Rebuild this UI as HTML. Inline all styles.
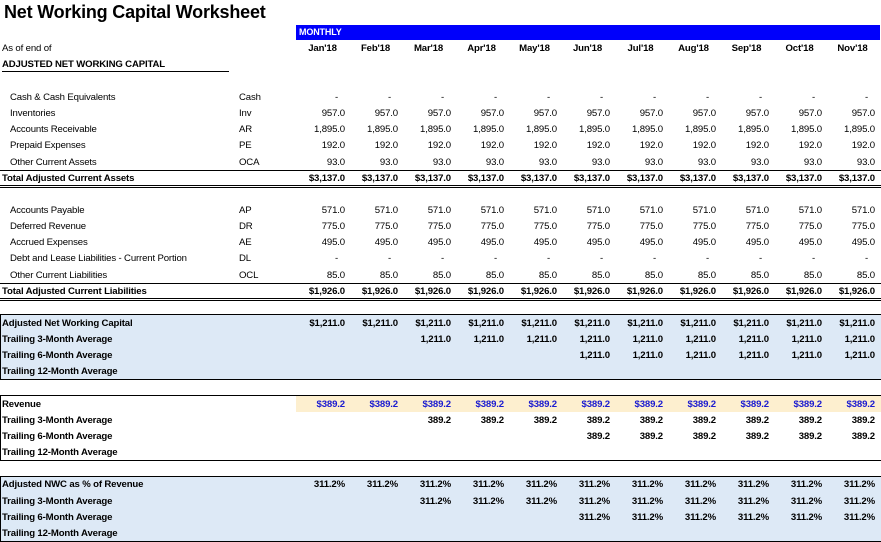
<!DOCTYPE html>
<html><head><meta charset="utf-8"><style>
*{margin:0;padding:0;box-sizing:border-box}
body{width:881px;height:542px;background:#fff;font-family:"Liberation Sans",sans-serif;font-size:9.6px;color:#000;position:relative;overflow:hidden;letter-spacing:-0.15px}
.r{position:absolute;left:0;width:881px;height:16px;line-height:16px;margin-top:1px}
.l{position:absolute;left:10px;top:0;white-space:nowrap}
.c{position:absolute;left:239px;top:0}
.v{position:absolute;left:296px;top:0;display:flex}
.v span{width:53px;text-align:right;padding-right:4px;white-space:nowrap}
.v span.d{padding-right:11px}
.b{font-weight:bold}
.b .l{left:2px}
.box{position:absolute;left:0;width:881px;height:66px;border:1px solid #000;border-right:none}
.ctr span{text-align:center;padding-right:0}
</style></head><body>
<div style="position:absolute;left:4px;top:2px;font-size:18px;font-weight:bold;letter-spacing:-0.2px">Net Working Capital Worksheet</div>
<div style="position:absolute;left:296px;top:25px;width:584px;height:15px;background:#0000fb;color:#fff;font-weight:bold;font-size:9px;line-height:15px;padding-left:3px">MONTHLY</div>
<div class="r" style="top:40px"><div class="l" style="left:2px">As of end of</div><div class="v b ctr"><span>Jan'18</span><span>Feb'18</span><span>Mar'18</span><span>Apr'18</span><span>May'18</span><span>Jun'18</span><span>Jul'18</span><span>Aug'18</span><span>Sep'18</span><span>Oct'18</span><span>Nov'18</span></div></div>
<div class="r b" style="top:56px"><div class="l">ADJUSTED NET WORKING CAPITAL</div></div>
<div style="position:absolute;left:2px;top:71px;width:227px;height:1px;background:#000"></div>

<div class="r" style="top:89px"><div class="l">Cash &amp; Cash Equivalents</div><div class="c">Cash</div><div class="v"><span class="d">-</span><span class="d">-</span><span class="d">-</span><span class="d">-</span><span class="d">-</span><span class="d">-</span><span class="d">-</span><span class="d">-</span><span class="d">-</span><span class="d">-</span><span class="d">-</span></div></div>
<div class="r" style="top:105px"><div class="l">Inventories</div><div class="c">Inv</div><div class="v"><span>957.0</span><span>957.0</span><span>957.0</span><span>957.0</span><span>957.0</span><span>957.0</span><span>957.0</span><span>957.0</span><span>957.0</span><span>957.0</span><span>957.0</span></div></div>
<div class="r" style="top:121px"><div class="l">Accounts Receivable</div><div class="c">AR</div><div class="v"><span>1,895.0</span><span>1,895.0</span><span>1,895.0</span><span>1,895.0</span><span>1,895.0</span><span>1,895.0</span><span>1,895.0</span><span>1,895.0</span><span>1,895.0</span><span>1,895.0</span><span>1,895.0</span></div></div>
<div class="r" style="top:137px"><div class="l">Prepaid Expenses</div><div class="c">PE</div><div class="v"><span>192.0</span><span>192.0</span><span>192.0</span><span>192.0</span><span>192.0</span><span>192.0</span><span>192.0</span><span>192.0</span><span>192.0</span><span>192.0</span><span>192.0</span></div></div>
<div class="r" style="top:154px"><div class="l">Other Current Assets</div><div class="c">OCA</div><div class="v"><span>93.0</span><span>93.0</span><span>93.0</span><span>93.0</span><span>93.0</span><span>93.0</span><span>93.0</span><span>93.0</span><span>93.0</span><span>93.0</span><span>93.0</span></div></div>
<div style="position:absolute;left:0;top:170px;width:881px;height:1px;background:#000"></div>
<div class="r b" style="top:170px"><div class="l">Total Adjusted Current Assets</div><div class="v"><span>$3,137.0</span><span>$3,137.0</span><span>$3,137.0</span><span>$3,137.0</span><span>$3,137.0</span><span>$3,137.0</span><span>$3,137.0</span><span>$3,137.0</span><span>$3,137.0</span><span>$3,137.0</span><span>$3,137.0</span></div></div>
<div style="position:absolute;left:0;top:185px;width:881px;height:3px;border-top:1px solid #000;border-bottom:1px solid #000"></div>

<div class="r" style="top:202px"><div class="l">Accounts Payable</div><div class="c">AP</div><div class="v"><span>571.0</span><span>571.0</span><span>571.0</span><span>571.0</span><span>571.0</span><span>571.0</span><span>571.0</span><span>571.0</span><span>571.0</span><span>571.0</span><span>571.0</span></div></div>
<div class="r" style="top:218px"><div class="l">Deferred Revenue</div><div class="c">DR</div><div class="v"><span>775.0</span><span>775.0</span><span>775.0</span><span>775.0</span><span>775.0</span><span>775.0</span><span>775.0</span><span>775.0</span><span>775.0</span><span>775.0</span><span>775.0</span></div></div>
<div class="r" style="top:234px"><div class="l">Accrued Expenses</div><div class="c">AE</div><div class="v"><span>495.0</span><span>495.0</span><span>495.0</span><span>495.0</span><span>495.0</span><span>495.0</span><span>495.0</span><span>495.0</span><span>495.0</span><span>495.0</span><span>495.0</span></div></div>
<div class="r" style="top:250px"><div class="l">Debt and Lease Liabilities - Current Portion</div><div class="c">DL</div><div class="v"><span class="d">-</span><span class="d">-</span><span class="d">-</span><span class="d">-</span><span class="d">-</span><span class="d">-</span><span class="d">-</span><span class="d">-</span><span class="d">-</span><span class="d">-</span><span class="d">-</span></div></div>
<div class="r" style="top:267px"><div class="l">Other Current Liabilities</div><div class="c">OCL</div><div class="v"><span>85.0</span><span>85.0</span><span>85.0</span><span>85.0</span><span>85.0</span><span>85.0</span><span>85.0</span><span>85.0</span><span>85.0</span><span>85.0</span><span>85.0</span></div></div>
<div style="position:absolute;left:0;top:283px;width:881px;height:1px;background:#000"></div>
<div class="r b" style="top:283px"><div class="l">Total Adjusted Current Liabilities</div><div class="v"><span>$1,926.0</span><span>$1,926.0</span><span>$1,926.0</span><span>$1,926.0</span><span>$1,926.0</span><span>$1,926.0</span><span>$1,926.0</span><span>$1,926.0</span><span>$1,926.0</span><span>$1,926.0</span><span>$1,926.0</span></div></div>
<div style="position:absolute;left:0;top:298px;width:881px;height:3px;border-top:1px solid #000;border-bottom:1px solid #000"></div>

<div class="box" style="top:314px;background:#dde9f6"></div>
<div class="r b" style="top:315px"><div class="l">Adjusted Net Working Capital</div><div class="v"><span>$1,211.0</span><span>$1,211.0</span><span>$1,211.0</span><span>$1,211.0</span><span>$1,211.0</span><span>$1,211.0</span><span>$1,211.0</span><span>$1,211.0</span><span>$1,211.0</span><span>$1,211.0</span><span>$1,211.0</span></div></div>
<div class="r b" style="top:331px"><div class="l">Trailing 3-Month Average</div><div class="v"><span></span><span></span><span>1,211.0</span><span>1,211.0</span><span>1,211.0</span><span>1,211.0</span><span>1,211.0</span><span>1,211.0</span><span>1,211.0</span><span>1,211.0</span><span>1,211.0</span></div></div>
<div class="r b" style="top:347px"><div class="l">Trailing 6-Month Average</div><div class="v"><span></span><span></span><span></span><span></span><span></span><span>1,211.0</span><span>1,211.0</span><span>1,211.0</span><span>1,211.0</span><span>1,211.0</span><span>1,211.0</span></div></div>
<div class="r b" style="top:363px"><div class="l">Trailing 12-Month Average</div></div>

<div class="box" style="top:395px;background:#fff"></div>
<div style="position:absolute;left:296px;top:396px;width:585px;height:16px;background:#fdefcf"></div>
<div class="r b" style="top:396px"><div class="l">Revenue</div><div class="v" style="color:#1a1ad0"><span>$389.2</span><span>$389.2</span><span>$389.2</span><span>$389.2</span><span>$389.2</span><span>$389.2</span><span>$389.2</span><span>$389.2</span><span>$389.2</span><span>$389.2</span><span>$389.2</span></div></div>
<div class="r b" style="top:412px"><div class="l">Trailing 3-Month Average</div><div class="v"><span></span><span></span><span>389.2</span><span>389.2</span><span>389.2</span><span>389.2</span><span>389.2</span><span>389.2</span><span>389.2</span><span>389.2</span><span>389.2</span></div></div>
<div class="r b" style="top:428px"><div class="l">Trailing 6-Month Average</div><div class="v"><span></span><span></span><span></span><span></span><span></span><span>389.2</span><span>389.2</span><span>389.2</span><span>389.2</span><span>389.2</span><span>389.2</span></div></div>
<div class="r b" style="top:444px"><div class="l">Trailing 12-Month Average</div></div>

<div class="box" style="top:476px;background:#dde9f6"></div>
<div class="r b" style="top:476px"><div class="l">Adjusted NWC as % of Revenue</div><div class="v"><span>311.2%</span><span>311.2%</span><span>311.2%</span><span>311.2%</span><span>311.2%</span><span>311.2%</span><span>311.2%</span><span>311.2%</span><span>311.2%</span><span>311.2%</span><span>311.2%</span></div></div>
<div class="r b" style="top:493px"><div class="l">Trailing 3-Month Average</div><div class="v"><span></span><span></span><span>311.2%</span><span>311.2%</span><span>311.2%</span><span>311.2%</span><span>311.2%</span><span>311.2%</span><span>311.2%</span><span>311.2%</span><span>311.2%</span></div></div>
<div class="r b" style="top:509px"><div class="l">Trailing 6-Month Average</div><div class="v"><span></span><span></span><span></span><span></span><span></span><span>311.2%</span><span>311.2%</span><span>311.2%</span><span>311.2%</span><span>311.2%</span><span>311.2%</span></div></div>
<div class="r b" style="top:525px"><div class="l">Trailing 12-Month Average</div></div>
</body></html>
